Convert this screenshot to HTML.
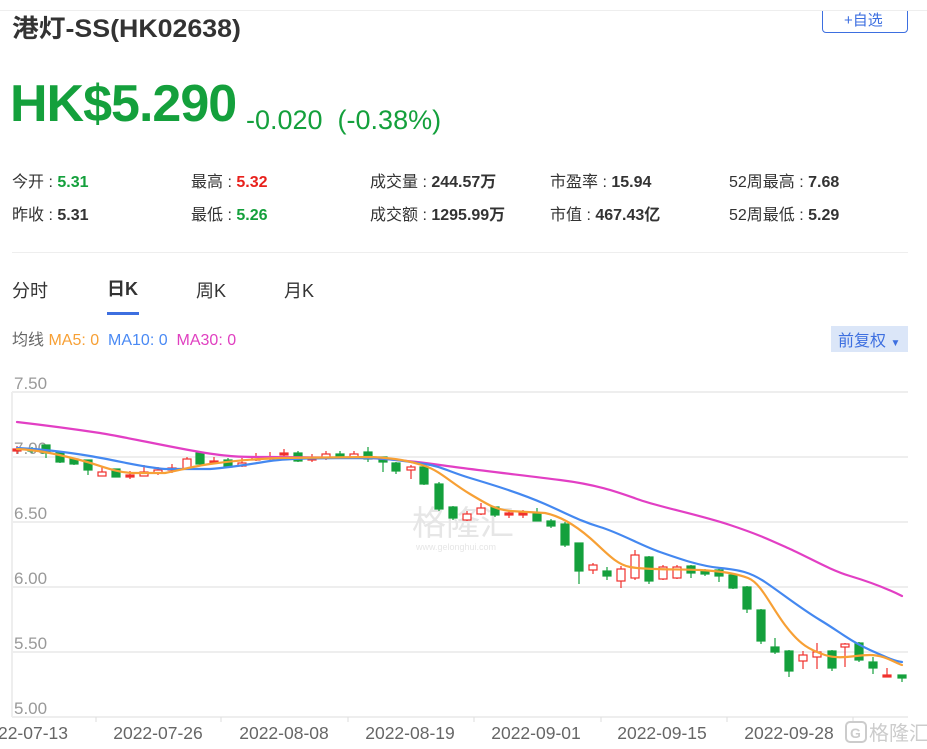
<!DOCTYPE html>
<html><head><meta charset="utf-8"><style>
body{margin:0;width:927px;height:749px;background:#fff;font-family:"Liberation Sans","Noto Sans CJK SC",sans-serif;position:relative;overflow:hidden;color:#333}
.a{position:absolute;white-space:nowrap}
.g{color:#14a03c}.r{color:#e8211c}
.st{font-size:16px;color:#333}
.st b{font-weight:bold}
</style></head><body>
<div class="a" style="left:822px;top:2px;width:86px;height:31px;border:1px solid #3d6fe0;border-radius:4px;box-sizing:border-box"></div>
<div class="a" style="left:0;top:0;width:927px;height:10px;background:#fff"></div>
<div class="a" style="left:0;top:10px;width:927px;height:1px;background:#eee"></div>
<div class="a" style="left:12px;top:9px;font-size:25px;font-weight:bold;color:#333;transform:scaleX(1.07);transform-origin:left">港灯-SS(HK02638)</div>
<div class="a" style="left:844px;top:9px;font-size:15px;color:#3d6fe0">+自选</div>
<div class="a g" style="left:10px;top:74px;font-size:52px;font-weight:bold;letter-spacing:-1px">HK$5.290</div>
<div class="a g" style="left:246px;top:105px;font-size:27px">-0.020 &nbsp;(-0.38%)</div>
<div class="a st" style="left:12px;top:168px">今开 : <b class="g">5.31</b></div>
<div class="a st" style="left:191px;top:168px">最高 : <b class="r">5.32</b></div>
<div class="a st" style="left:370px;top:168px">成交量 : <b>244.57万</b></div>
<div class="a st" style="left:550px;top:168px">市盈率 : <b>15.94</b></div>
<div class="a st" style="left:729px;top:168px">52周最高 : <b>7.68</b></div>
<div class="a st" style="left:12px;top:201px">昨收 : <b>5.31</b></div>
<div class="a st" style="left:191px;top:201px">最低 : <b class="g">5.26</b></div>
<div class="a st" style="left:370px;top:201px">成交额 : <b>1295.99万</b></div>
<div class="a st" style="left:550px;top:201px">市值 : <b>467.43亿</b></div>
<div class="a st" style="left:729px;top:201px">52周最低 : <b>5.29</b></div>
<div class="a" style="left:12px;top:252px;width:896px;height:1px;background:#eee"></div>
<div class="a" style="left:12px;top:277px;font-size:18px">分时</div>
<div class="a" style="left:107px;top:275px;font-size:18px;font-weight:bold">日K</div>
<div class="a" style="left:196px;top:277px;font-size:18px">周K</div>
<div class="a" style="left:284px;top:277px;font-size:18px">月K</div>
<div class="a" style="left:107px;top:312px;width:32px;height:3px;background:#3d6fe0"></div>
<div class="a" style="left:12px;top:326px;font-size:16px;color:#666">均线 <span style="color:#f7a035">MA5: 0</span>&nbsp; <span style="color:#4a8af4">MA10: 0</span>&nbsp; <span style="color:#e040c0">MA30: 0</span></div>
<div class="a" style="left:831px;top:326px;width:77px;height:26px;background:#dbe6f8"></div>
<div class="a" style="left:838px;top:327px;font-size:16px;color:#3d6fe0">前复权 <span style="font-size:10px">▼</span></div>
<svg class="a" style="left:0;top:0" width="927" height="749" viewBox="0 0 927 749">
<g stroke="#eee" stroke-width="2">
<line x1="12" y1="392" x2="908" y2="392"/><line x1="12" y1="457" x2="908" y2="457"/><line x1="12" y1="522" x2="908" y2="522"/><line x1="12" y1="587" x2="908" y2="587"/><line x1="12" y1="652" x2="908" y2="652"/><line x1="12" y1="717" x2="908" y2="717"/>
<line x1="12" y1="392" x2="12" y2="717"/>
</g>
<g stroke="#ddd" stroke-width="1"><line x1="96" y1="717" x2="96" y2="722"/><line x1="221" y1="717" x2="221" y2="722"/><line x1="348" y1="717" x2="348" y2="722"/><line x1="474" y1="717" x2="474" y2="722"/><line x1="601" y1="717" x2="601" y2="722"/><line x1="727" y1="717" x2="727" y2="722"/><line x1="853" y1="717" x2="853" y2="722"/></g>
<g font-family="Liberation Sans,sans-serif" font-size="17" fill="#999">
<text x="14" y="389">7.50</text><text x="14" y="454">7.00</text><text x="14" y="519">6.50</text><text x="14" y="584">6.00</text><text x="14" y="649">5.50</text><text x="14" y="714">5.00</text>
</g>
<g font-family="Liberation Sans,sans-serif" font-size="17.5" fill="#666" text-anchor="middle">
<text x="33" y="739">22-07-13</text><text x="158" y="739">2022-07-26</text><text x="284" y="739">2022-08-08</text><text x="410" y="739">2022-08-19</text><text x="536" y="739">2022-09-01</text><text x="662" y="739">2022-09-15</text><text x="789" y="739">2022-09-28</text>
</g>
<text x="412" y="535" font-family="Noto Sans CJK SC,sans-serif" font-size="34" fill="#e6e6e6">格隆汇</text>
<text x="416" y="550" font-family="Liberation Sans,sans-serif" font-size="9" fill="#e6e6e6">www.gelonghui.com</text>
<g stroke-width="1.2">
<g fill="#14a03c" stroke="#14a03c">
<line x1="32" y1="447" x2="32" y2="453"/><rect x="28" y="449" width="8" height="2"/>
<line x1="46" y1="445" x2="46" y2="458"/><rect x="42" y="445" width="8" height="8"/>
<line x1="60" y1="452" x2="60" y2="463"/><rect x="56" y="452" width="8" height="10"/>
<line x1="74" y1="458" x2="74" y2="465"/><rect x="70" y="459" width="8" height="5"/>
<line x1="88" y1="460" x2="88" y2="475"/><rect x="84" y="460" width="8" height="10"/>
<rect x="112" y="469" width="8" height="8"/>
<line x1="200" y1="452" x2="200" y2="465"/><rect x="196" y="453" width="8" height="11"/>
<line x1="228" y1="458" x2="228" y2="468"/><rect x="224" y="460" width="8" height="7"/>
<line x1="298" y1="451" x2="298" y2="462"/><rect x="294" y="453" width="8" height="8"/>
<line x1="340" y1="451" x2="340" y2="458"/><rect x="336" y="454" width="8" height="3"/>
<line x1="368" y1="447" x2="368" y2="462"/><rect x="364" y="452" width="8" height="7"/>
<line x1="383" y1="457" x2="383" y2="472"/><rect x="379" y="457" width="8" height="5"/>
<line x1="396" y1="462" x2="396" y2="474"/><rect x="392" y="463" width="8" height="8"/>
<line x1="424" y1="466" x2="424" y2="485"/><rect x="420" y="467" width="8" height="17"/>
<line x1="439" y1="482" x2="439" y2="511"/><rect x="435" y="484" width="8" height="25"/>
<line x1="453" y1="506" x2="453" y2="520"/><rect x="449" y="507" width="8" height="11"/>
<line x1="495" y1="507" x2="495" y2="517"/><rect x="491" y="507" width="8" height="8"/>
<line x1="537" y1="508" x2="537" y2="521"/><rect x="533" y="514" width="8" height="7"/>
<line x1="551" y1="519" x2="551" y2="528"/><rect x="547" y="521" width="8" height="5"/>
<line x1="565" y1="522" x2="565" y2="547"/><rect x="561" y="524" width="8" height="21"/>
<line x1="579" y1="543" x2="579" y2="584"/><rect x="575" y="543" width="8" height="28"/>
<line x1="607" y1="567" x2="607" y2="580"/><rect x="603" y="571" width="8" height="5"/>
<line x1="649" y1="556" x2="649" y2="584"/><rect x="645" y="557" width="8" height="24"/>
<line x1="691" y1="565" x2="691" y2="578"/><rect x="687" y="566" width="8" height="7"/>
<line x1="705" y1="569" x2="705" y2="576"/><rect x="701" y="571" width="8" height="3"/>
<line x1="719" y1="569" x2="719" y2="582"/><rect x="715" y="570" width="8" height="6"/>
<line x1="733" y1="574" x2="733" y2="589"/><rect x="729" y="575" width="8" height="13"/>
<line x1="747" y1="586" x2="747" y2="613"/><rect x="743" y="587" width="8" height="22"/>
<line x1="761" y1="609" x2="761" y2="644"/><rect x="757" y="610" width="8" height="31"/>
<line x1="775" y1="638" x2="775" y2="654"/><rect x="771" y="647" width="8" height="5"/>
<line x1="789" y1="650" x2="789" y2="677"/><rect x="785" y="651" width="8" height="20"/>
<line x1="832" y1="650" x2="832" y2="671"/><rect x="828" y="651" width="8" height="17"/>
<line x1="859" y1="642" x2="859" y2="662"/><rect x="855" y="643" width="8" height="17"/>
<line x1="873" y1="657" x2="873" y2="674"/><rect x="869" y="662" width="8" height="6"/>
<line x1="902" y1="675" x2="902" y2="682"/><rect x="898" y="675" width="8" height="3"/>
</g>
<g fill="#fff" stroke="#f0302c">
<line x1="17" y1="446" x2="17" y2="454"/><rect x="13" y="449" width="8" height="2" fill="#f0302c"/>
<line x1="102" y1="467" x2="102" y2="472"/><rect x="98" y="472" width="8" height="4"/>
<line x1="130" y1="471" x2="130" y2="479"/><rect x="126" y="475" width="8" height="2" fill="#f0302c"/>
<line x1="144" y1="465" x2="144" y2="472"/><rect x="140" y="472" width="8" height="4"/>
<line x1="158" y1="467" x2="158" y2="475"/><rect x="154" y="470" width="8" height="3"/>
<line x1="172" y1="464" x2="172" y2="473"/><rect x="168" y="468" width="8" height="2" fill="#f0302c"/>
<line x1="187" y1="457" x2="187" y2="470"/><rect x="183" y="459" width="8" height="10"/>
<line x1="214" y1="457" x2="214" y2="464"/><rect x="210" y="461" width="8" height="2" fill="#f0302c"/>
<line x1="242" y1="458" x2="242" y2="467"/><rect x="238" y="463" width="8" height="3"/>
<line x1="256" y1="453" x2="256" y2="461"/><rect x="252" y="457" width="8" height="3"/>
<line x1="270" y1="452" x2="270" y2="461"/><rect x="266" y="457" width="8" height="2" fill="#f0302c"/>
<line x1="284" y1="449" x2="284" y2="457"/><rect x="280" y="453" width="8" height="2" fill="#f0302c"/>
<line x1="312" y1="454" x2="312" y2="462"/><rect x="308" y="458" width="8" height="2" fill="#f0302c"/>
<line x1="326" y1="451" x2="326" y2="460"/><rect x="322" y="454" width="8" height="4"/>
<line x1="354" y1="451" x2="354" y2="459"/><rect x="350" y="454" width="8" height="3"/>
<line x1="411" y1="465" x2="411" y2="479"/><rect x="407" y="467" width="8" height="3"/>
<line x1="467" y1="511" x2="467" y2="521"/><rect x="463" y="514" width="8" height="6"/>
<line x1="481" y1="503" x2="481" y2="515"/><rect x="477" y="508" width="8" height="6"/>
<line x1="509" y1="510" x2="509" y2="518"/><rect x="505" y="513" width="8" height="2" fill="#f0302c"/>
<line x1="523" y1="510" x2="523" y2="518"/><rect x="519" y="513" width="8" height="2" fill="#f0302c"/>
<line x1="593" y1="563" x2="593" y2="574"/><rect x="589" y="565" width="8" height="5"/>
<line x1="621" y1="566" x2="621" y2="588"/><rect x="617" y="569" width="8" height="12"/>
<line x1="635" y1="550" x2="635" y2="580"/><rect x="631" y="555" width="8" height="23"/>
<line x1="663" y1="565" x2="663" y2="580"/><rect x="659" y="567" width="8" height="12"/>
<line x1="677" y1="565" x2="677" y2="579"/><rect x="673" y="567" width="8" height="11"/>
<line x1="803" y1="651" x2="803" y2="669"/><rect x="799" y="655" width="8" height="6"/>
<line x1="817" y1="643" x2="817" y2="669"/><rect x="813" y="652" width="8" height="5"/>
<line x1="845" y1="643" x2="845" y2="667"/><rect x="841" y="644" width="8" height="3"/>
<line x1="887" y1="668" x2="887" y2="677"/><rect x="883" y="675" width="8" height="2" fill="#f0302c"/>
</g>
</g>
<g fill="none" stroke-width="2.2" stroke-linejoin="round" stroke-linecap="round">
<path stroke="#e23fc4" d="M17 422 C60 427 80 430 100 433 S170 447 200 452 S240 457 270 457 L370 458 C400 460 420 462 440 465 S520 475 560 480 S620 493 640 500 S700 515 730 525 S770 540 790 549 S830 570 850 576 S890 590 902 596"/>
<path stroke="#4488f0" d="M17 448 C40 449 60 451 90 456 S140 467 165 469 L210 469 C235 467 250 464 270 461 S330 458 370 458 C395 459 410 462 425 464 S450 472 470 478 S520 493 545 504 S580 521 600 527 S640 545 660 552 S700 566 720 568 S750 572 765 582 S800 608 820 620 S850 641 870 650 S895 661 902 662"/>
<path stroke="#f7a035" d="M17 449 C40 450 60 455 80 460 S115 473 135 473 L165 473 C180 470 195 466 210 464 S250 459 280 458 L370 457 C395 458 410 461 425 466 S450 482 470 494 S495 509 510 511 L545 513 C560 516 575 525 590 538 S615 564 630 567 S680 569 700 570 S735 573 748 578 S770 605 785 625 S810 650 825 655 S855 655 870 655 S895 663 902 665"/>
</g>
<g font-family="Noto Sans CJK SC,sans-serif">
<rect x="846" y="722" width="20" height="20" rx="4" fill="none" stroke="#ccc" stroke-width="2"/>
<text x="850" y="738" font-size="14" fill="#ccc" font-family="Liberation Sans,sans-serif" font-weight="bold">G</text>
<text x="869" y="740" font-size="20" fill="#ccc">格隆汇</text>
</g>
</svg>
</body></html>
